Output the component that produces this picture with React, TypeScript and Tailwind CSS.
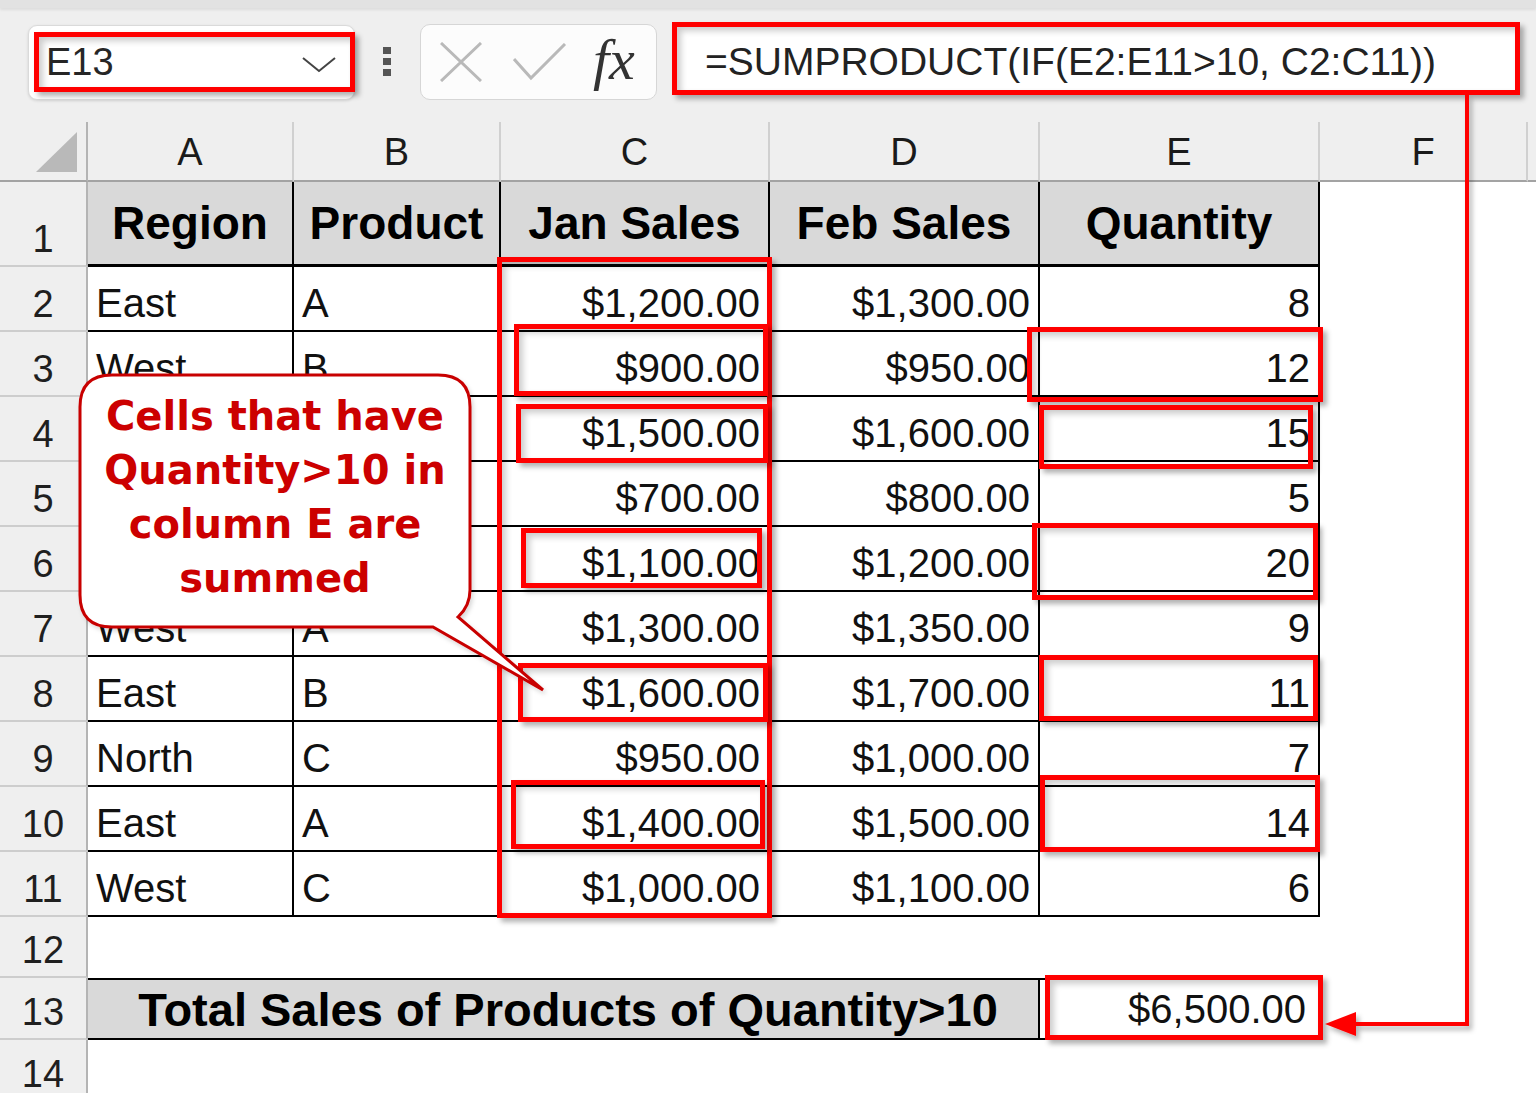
import React from 'react';

const letters = ['A', 'B', 'C', 'D', 'E', 'F'];

// region, product, jan, feb, qty (rows 4-6 of A/B sit under the callout)
const data: string[][] = [
  ['East', 'A', '$1,200.00', '$1,300.00', '8'],
  ['West', 'B', '$900.00', '$950.00', '12'],
  ['', '', '$1,500.00', '$1,600.00', '15'],
  ['', '', '$700.00', '$800.00', '5'],
  ['', '', '$1,100.00', '$1,200.00', '20'],
  ['West', 'A', '$1,300.00', '$1,350.00', '9'],
  ['East', 'B', '$1,600.00', '$1,700.00', '11'],
  ['North', 'C', '$950.00', '$1,000.00', '7'],
  ['East', 'A', '$1,400.00', '$1,500.00', '14'],
  ['West', 'C', '$1,000.00', '$1,100.00', '6'],
];

const headers = ['Region', 'Product', 'Jan Sales', 'Feb Sales', 'Quantity'];

// red highlight boxes drawn over the sheet
const boxes = [
  'left-[497px] top-[257px] w-[275px] h-[661px]',
  'left-[514px] top-[324px] w-[254px] h-[72px]',
  'left-[516px] top-[404px] w-[252px] h-[59px]',
  'left-[521px] top-[528px] w-[241px] h-[60px]',
  'left-[518px] top-[663px] w-[250px] h-[59px]',
  'left-[511px] top-[780px] w-[254px] h-[69px]',
  'left-[1027px] top-[327px] w-[296px] h-[75px]',
  'left-[1039px] top-[405px] w-[274px] h-[64px]',
  'left-[1032px] top-[523px] w-[286px] h-[77px]',
  'left-[1039px] top-[655px] w-[279px] h-[66px]',
  'left-[1040px] top-[775px] w-[280px] h-[77px]',
  'left-[1045px] top-[975px] w-[278px] h-[65px]',
];

const GRID = 'grid grid-cols-[88px_206px_207px_269px_270px_280px_208px_1fr]';
const redBox =
  'border-[5px] border-[#ff0000] shadow-[4px_4px_5px_rgba(0,0,0,0.3),inset_4px_4px_6px_rgba(0,0,0,0.2)]';

const RowNum = ({ n, h }: { n: number; h: string }) => (
  <div className={`${h} flex items-end justify-center pb-[7px] bg-[#efefef] border-r-2 border-r-[#b4b4b4] border-b-2 border-b-[#cdcdcd] text-[38px] leading-none text-[#1f1f1f]`}>
    {n}
  </div>
);

const Cell = ({ children, right }: { children?: React.ReactNode; right?: boolean }) => (
  <div
    className={`h-[65px] flex items-end pb-[7px] bg-white border-b-2 border-r-2 border-black text-[40px] leading-none text-[#111] ${right ? 'justify-end pr-[8px]' : 'pl-[8px]'}`}
  >
    {children}
  </div>
);

export default function App() {
  return (
    <div className="relative w-[1536px] h-[1093px] overflow-hidden bg-white font-['Liberation_Sans',Arial,sans-serif]">
      {/* formula bar */}
      <div className="h-[122px] bg-[#efefef] flex flex-col">
        <div className="h-[8px] bg-[#e2e2e2] shadow-[0_2px_3px_rgba(0,0,0,0.08)]" />
        <div className="flex items-start">
          <div className="relative ml-[28px] mt-[17px] w-[327px] h-[75px] rounded-[9px] bg-white border border-[#dadada] shadow-[0_1px_3px_rgba(0,0,0,0.12)]">
            <div className={`absolute left-[5px] top-[6px] w-[321px] h-[60px] ${redBox} flex items-center justify-between pl-[7px] pr-[14px]`}>
              <span className="text-[38px] leading-none text-[#262626]">E13</span>
              <svg width="34" height="16" viewBox="0 0 34 16" className="mt-[6px]">
                <path d="M1 1 L17 14 L33 1" fill="none" stroke="#444" strokeWidth="2" />
              </svg>
            </div>
          </div>
          <div className="ml-[28px] mt-[39px] flex flex-col gap-[4px]">
            <div className="w-[8px] h-[7px] bg-[#555]" />
            <div className="w-[8px] h-[7px] bg-[#555]" />
            <div className="w-[8px] h-[7px] bg-[#555]" />
          </div>
          <div className="ml-[29px] mt-[16px] w-[237px] h-[76px] rounded-[10px] border border-[#d6d6d6] bg-[#fcfcfc] flex items-center pl-[19px]">
            <svg width="42" height="40" viewBox="0 0 42 40">
              <path d="M1 1 L41 39 M41 1 L1 39" stroke="#b9b9b9" strokeWidth="3" fill="none" />
            </svg>
            <svg width="54" height="38" viewBox="0 0 54 38" className="ml-[31px]">
              <path d="M1 16 L18 35 L52 1" stroke="#b9b9b9" strokeWidth="3" fill="none" />
            </svg>
            <span className="ml-[26px] -mt-[4px] font-['Liberation_Serif',serif] italic text-[58px] leading-none text-[#333]">
              fx
            </span>
          </div>
          <div className={`ml-[15px] mt-[14px] w-[848px] h-[73px] bg-white ${redBox} flex items-center pl-[28px] pt-[6px]`}>
            <span className="text-[39px] leading-none text-[#222]">=SUMPRODUCT(IF(E2:E11&gt;10, C2:C11))</span>
          </div>
        </div>
      </div>

      {/* column headers */}
      <div className={`${GRID} h-[60px] bg-[#efefef]`}>
        <div className="flex items-end justify-end pr-[9px] pb-[8px] border-r-2 border-r-[#b4b4b4] border-b-2 border-b-[#a3a3a3]">
          <svg width="41" height="40" viewBox="0 0 41 40">
            <path d="M41 0 L41 40 L0 40 Z" fill="#b9b9b9" />
          </svg>
        </div>
        {letters.map(l => (
          <div
            key={l}
            className="flex items-center justify-center border-r-2 border-r-[#d0d0d0] border-b-2 border-b-[#a3a3a3] text-[38px] leading-none text-[#1a1a1a] pt-[2px]"
          >
            {l}
          </div>
        ))}
        <div className="border-b-2 border-b-[#a3a3a3]" />
      </div>

      {/* row 1 */}
      <div className={GRID}>
        <RowNum n={1} h="h-[85px]" />
        {headers.map(h => (
          <div
            key={h}
            className="h-[85px] flex items-center justify-center bg-[#d9d9d9] border-b-[3px] border-r-2 border-black text-[46px] font-bold leading-none text-black"
          >
            {h}
          </div>
        ))}
        <div className="bg-white" />
        <div className="bg-white" />
      </div>

      {/* rows 2-11 */}
      {data.map((r, i) => (
        <div key={i} className={GRID}>
          <RowNum n={i + 2} h="h-[65px]" />
          <Cell>{r[0]}</Cell>
          <Cell>{r[1]}</Cell>
          <Cell right>{r[2]}</Cell>
          <Cell right>{r[3]}</Cell>
          <Cell right>{r[4]}</Cell>
          <div className="bg-white" />
          <div className="bg-white" />
        </div>
      ))}

      {/* row 12 */}
      <div className={GRID}>
        <RowNum n={12} h="h-[61px]" />
        <div className="col-span-7 bg-white" />
      </div>

      {/* row 13 */}
      <div className={GRID}>
        <RowNum n={13} h="h-[62px]" />
        <div className="col-span-4 h-[62px] flex items-center justify-center bg-[#d9d9d9] border-t-2 border-b-2 border-r-2 border-black text-[47px] font-bold leading-none text-black pl-[10px]">
          Total Sales of Products of Quantity&gt;10
        </div>
        <div className="h-[62px] flex items-end justify-end pr-[12px] pb-[9px] bg-white border-t-2 border-b-2 border-r-2 border-black text-[40px] leading-none text-[#111]">
          $6,500.00
        </div>
        <div className="bg-white" />
        <div className="bg-white" />
      </div>

      {/* row 14 */}
      <div className={GRID}>
        <RowNum n={14} h="h-[62px]" />
        <div className="col-span-7 bg-white" />
      </div>

      {/* annotations */}
      {boxes.map((b, i) => (
        <div key={i} className={`absolute ${b} ${redBox} pointer-events-none`} />
      ))}

      <svg className="absolute left-0 top-0 pointer-events-none" width="1536" height="1093" viewBox="0 0 1536 1093">
        <defs>
          <filter id="sh" x="-10%" y="-10%" width="130%" height="130%">
            <feDropShadow dx="3" dy="4" stdDeviation="2.5" floodColor="#000" floodOpacity="0.3" />
          </filter>
          <filter id="sh2" x="-10%" y="-10%" width="130%" height="130%">
            <feDropShadow dx="2" dy="3" stdDeviation="2" floodColor="#000" floodOpacity="0.15" />
          </filter>
        </defs>
        <path
          d="M112 375 H438 Q470 375 470 407 V590 Q470 606 458 617 L543 690 L433 627 H112 Q80 627 80 595 V407 Q80 375 112 375 Z"
          fill="#fff"
          stroke="#c80000"
          strokeWidth="3"
          filter="url(#sh2)"
        />
        <g filter="url(#sh)">
          <polyline points="1467,95 1467,1024 1352,1024" fill="none" stroke="#ff0000" strokeWidth="4" />
          <polygon points="1325,1024 1356,1012 1356,1036" fill="#ff0000" />
        </g>
      </svg>

      <div className="absolute left-[80px] top-[389px] w-[390px] text-center font-['DejaVu_Sans',sans-serif] font-bold text-[40px] leading-[54px] text-[#cc0000]">
        Cells that have
        <br />
        Quantity&gt;10 in
        <br />
        column E are
        <br />
        summed
      </div>
    </div>
  );
}
